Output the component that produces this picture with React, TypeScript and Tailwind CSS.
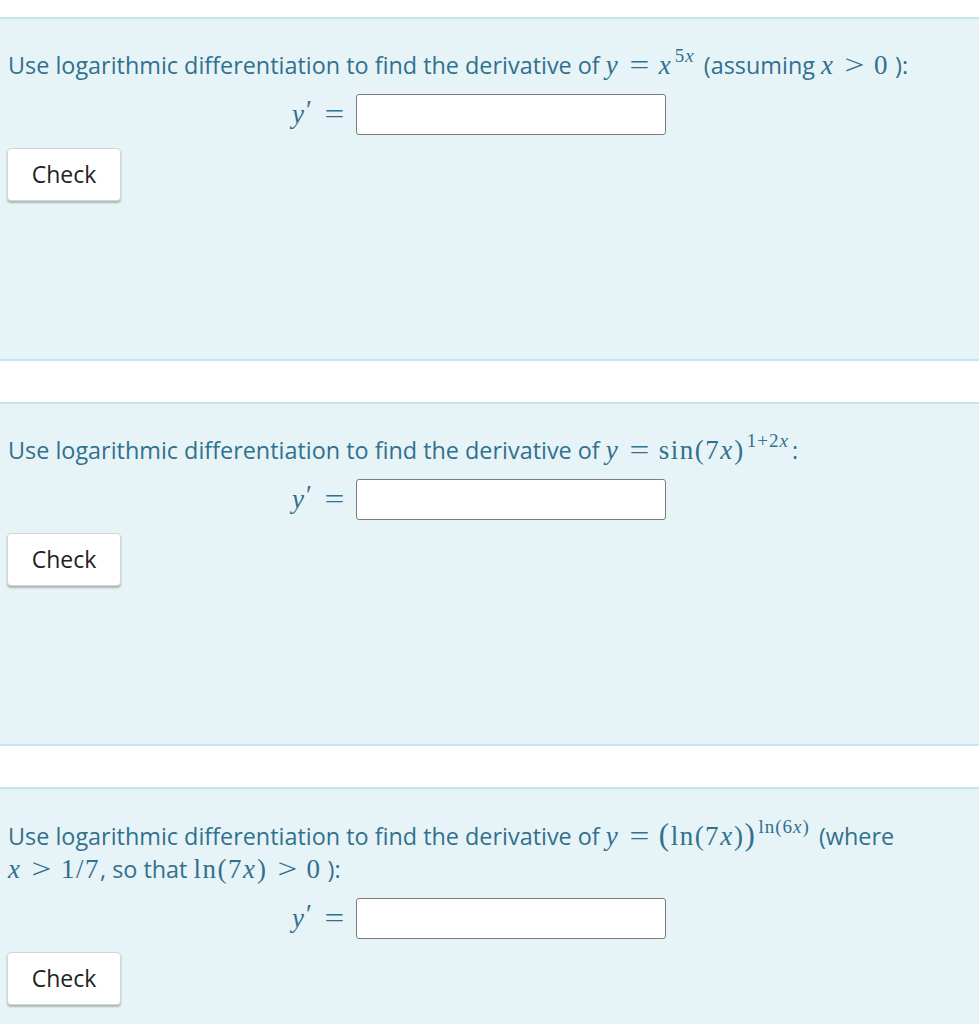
import React from "react";

const sans = "font-['Open_Sans','Noto_Sans',sans-serif]";
const serif = "font-['Liberation_Serif','DejaVu_Serif',serif]";

function Mi({ children }: { children: React.ReactNode }) {
  return <span className={`${serif} italic text-[27px] leading-none tracking-[2px]`}>{children}</span>;
}

function Mn({ children, className = "" }: { children: React.ReactNode; className?: string }) {
  return (
    <span className={`${serif} text-[27px] leading-none tracking-[1.5px] ${className}`}>{children}</span>
  );
}

// relation symbol, widened a bit to match the math font of the reference
function Rel({ children }: { children: React.ReactNode }) {
  return (
    <span className={`${serif} text-[27px] leading-none inline-block w-[21px] text-center scale-x-[1.3] mx-[9px]`}>
      {children}
    </span>
  );
}

function Sup({ children }: { children: React.ReactNode }) {
  return (
    <span className={`${serif} text-[19px] leading-none relative -top-[12px] ml-[2px] mr-[3px] tracking-[1px]`}>
      {children}
    </span>
  );
}

function AnswerRow() {
  return (
    <div className="flex items-center pl-[284px]">
      <div className={`${serif} w-[64px] flex items-center text-[27px] leading-none text-[#31708f]`}>
        <span className="italic">y</span>
        <span className="relative -top-[4px] ml-[2px]">′</span>
        <span className="inline-block w-[21px] text-center scale-x-[1.3] ml-[12px]">=</span>
      </div>
      <input
        type="text"
        className="w-[310px] h-[41px] bg-white border border-[#7b7b7b] rounded-[3px] outline-none"
      />
    </div>
  );
}

function CheckButton() {
  return (
    <button
      className={`${sans} w-[114px] h-[53px] -ml-[1px] bg-white border border-[#d5d5d5] rounded-[4px] shadow-[0_2px_2px_rgba(0,0,0,0.25)] text-[23px] text-[#222] flex items-center justify-center`}
    >
      Check
    </button>
  );
}

function Panel({ children }: { children: React.ReactNode }) {
  return (
    <div className="h-[344px] bg-[#e7f4f7] border-y-2 border-[#c0e6ee] px-2 pt-[30px]">
      {children}
    </div>
  );
}

export default function App() {
  return (
    <div className={`${sans} bg-white w-[979px] h-[1024px] overflow-hidden pt-[17px] text-[#31708f]`}>
      <Panel>
        <p className="text-[23.4px] leading-[32px] whitespace-nowrap">
          Use logarithmic differentiation to find the derivative of <Mi>y</Mi>
          <Rel>=</Rel>
          <Mi>x</Mi>
          <Sup>
            5<span className="italic">x</span>
          </Sup>{" "}
          (assuming <Mi>x</Mi>
          <Rel>&gt;</Rel>
          <Mn>0</Mn> ):
        </p>
        <div className="mt-[13px]">
          <AnswerRow />
        </div>
        <div className="mt-[13px]">
          <CheckButton />
        </div>
      </Panel>

      <div className="h-[41px]" />

      <Panel>
        <p className="text-[23.4px] leading-[32px] whitespace-nowrap">
          Use logarithmic differentiation to find the derivative of <Mi>y</Mi>
          <Rel>=</Rel>
          <Mn>sin(7</Mn>
          <Mi>x</Mi>
          <Mn>)</Mn>
          <Sup>
            1+2<span className="italic">x</span>
          </Sup>
          :
        </p>
        <div className="mt-[13px]">
          <AnswerRow />
        </div>
        <div className="mt-[13px]">
          <CheckButton />
        </div>
      </Panel>

      <div className="h-[41px]" />

      <Panel>
        <p className="text-[23.4px] leading-[33px] whitespace-nowrap">
          Use logarithmic differentiation to find the derivative of <Mi>y</Mi>
          <Rel>=</Rel>
          <Mn className="text-[31px]">(</Mn>
          <Mn>ln(7</Mn>
          <Mi>x</Mi>
          <Mn>)</Mn>
          <Mn className="text-[31px]">)</Mn>
          <Sup>
            ln(6<span className="italic">x</span>)
          </Sup>{" "}
          (where
          <br />
          <Mi>x</Mi>
          <Rel>&gt;</Rel>
          <Mn>1/7</Mn>, so that <Mn>ln(7</Mn>
          <Mi>x</Mi>
          <Mn>)</Mn>
          <Rel>&gt;</Rel>
          <Mn>0</Mn> ):
        </p>
        <div className="mt-[12px]">
          <AnswerRow />
        </div>
        <div className="mt-[13px]">
          <CheckButton />
        </div>
      </Panel>
    </div>
  );
}
